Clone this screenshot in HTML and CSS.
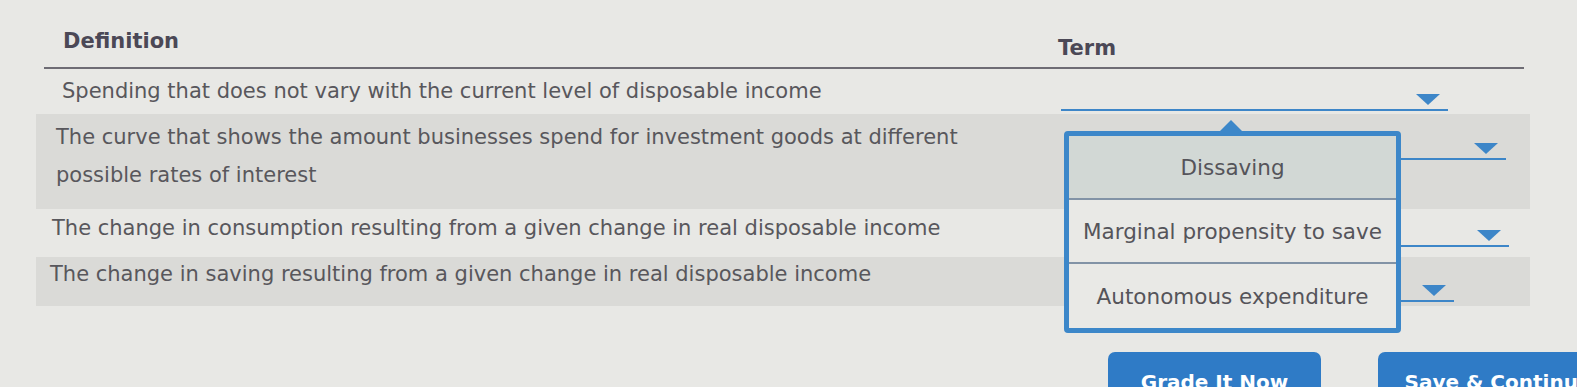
FILE: index.html
```html
<!DOCTYPE html>
<html>
<head>
<meta charset="utf-8">
<link rel="stylesheet" href="styles.css">
</head>
<body>
<div class="page">
  <div class="table">
    <div class="head">
      <div class="h-def">Definition</div>
      <div class="h-term">Term</div>
    </div>
    <div class="row r1">
      <div class="def">Spending that does not vary with the current level of disposable income</div>
      <div class="term"><div class="select s1"><span class="arrow"></span></div></div>
    </div>
    <div class="row r2 alt">
      <div class="def">The curve that shows the amount businesses spend for investment goods at different possible rates of interest</div>
      <div class="term">
        <div class="select s2"><span class="arrow"></span></div>
        <div class="popup">
          <span class="caret"></span>
          <div class="opt active">Dissaving</div>
          <div class="opt">Marginal propensity to save</div>
          <div class="opt">Autonomous expenditure</div>
        </div>
      </div>
    </div>
    <div class="row r3">
      <div class="def">The change in consumption resulting from a given change in real disposable income</div>
      <div class="term"><div class="select s3"><span class="arrow"></span></div></div>
    </div>
    <div class="row r4 alt">
      <div class="def">The change in saving resulting from a given change in real disposable income</div>
      <div class="term"><div class="select s4"><span class="arrow"></span></div></div>
    </div>
  </div>
  <div class="buttons">
    <button class="btn grade">Grade It Now</button>
    <button class="btn save">Save &amp; Continue</button>
  </div>
</div>
</body>
</html>
```
FILE: styles.css
```css
html, body {
  margin: 0;
  padding: 0;
  background: #e8e8e5;
  height: 387px;
  overflow: hidden;
}
.page {
  padding: 26px 47px 0 36px;
  font-family: "DejaVu Sans", Verdana, sans-serif;
  color: #58575c;
}
.table {
  width: 1494px;
}
.head {
  display: grid;
  grid-template-columns: 1014px 1fr;
  margin-left: 8px;
  margin-right: 6px;
  border-bottom: 2px solid #6e6c74;
  height: 41px;
  font-weight: bold;
  font-size: 21px;
  color: #4b4856;
}
.h-def { padding: 3px 0 0 19px; }
.h-term { padding: 10px 0 0 0; }
.row {
  display: grid;
  grid-template-columns: 1014px 1fr;
  font-size: 21px;
}
.row.alt { background: #dadad7; }
.def { line-height: 38px; }
.r1 { height: 45px; }
.r1 .def { padding: 3px 0 0 26px; }
.r2 { height: 95px; }
.r2 .def { padding: 4px 80px 0 20px; }
.r3 { height: 45px; }
.r3 .def { padding: 0 0 0 16px; }
.r4 { height: 49px; margin-top: 3px; }
.r4 .def { padding: 0 0 0 14px; line-height: 34px; }
.term { position: relative; }
.select {
  position: absolute;
  border-bottom: 2px solid #3d86c8;
  height: 26px;
}
.arrow {
  position: absolute;
  right: 8px;
  top: 11px;
  width: 0;
  height: 0;
  border-left: 12px solid transparent;
  border-right: 12px solid transparent;
  border-top: 11px solid #3d86c8;
}
.s1 { left: 11px; top: 14px; width: 387px; }
.s2 { left: 46px; top: 18px; width: 410px; }
.s3 { left: 46px; top: 10px; width: 413px; }
.s4 { left: 46px; top: 17px; width: 358px; }
.popup {
  position: absolute;
  left: 14px;
  top: 17px;
  width: 327px;
  border: 5px solid #3c87c9;
  border-radius: 4px;
  background: #e9e9e6;
  z-index: 5;
  display: flex;
  flex-direction: column;
}
.caret {
  position: absolute;
  left: 150px;
  top: -16px;
  width: 0;
  height: 0;
  border-left: 12px solid transparent;
  border-right: 12px solid transparent;
  border-bottom: 12px solid #3c87c9;
}
.opt {
  height: 62px;
  display: flex;
  align-items: center;
  justify-content: center;
  font-size: 21.5px;
  color: #55545a;
  border-top: 2px solid #8293a6;
  white-space: nowrap;
}
.opt:first-of-type { border-top: none; }
.opt.active {
  background: #d2d8d5;
  height: 62px;
  align-items: flex-start;
  line-height: 64px;
}
.opt:last-child { height: 64px; }
.buttons {
  display: flex;
  gap: 57px;
  margin-top: 46px;
  margin-left: 1072px;
}
.btn {
  flex-shrink: 0;
  border: none;
  background: #2f7bc6;
  color: #ffffff;
  font-family: "DejaVu Sans", Verdana, sans-serif;
  font-weight: bold;
  font-size: 20px;
  border-radius: 7px;
  height: 60px;
  padding: 18px 0 0 0;
  display: flex;
  justify-content: center;
  align-items: flex-start;
  white-space: nowrap;
}
.grade { width: 213px; }
.save { width: 240px; }
```
